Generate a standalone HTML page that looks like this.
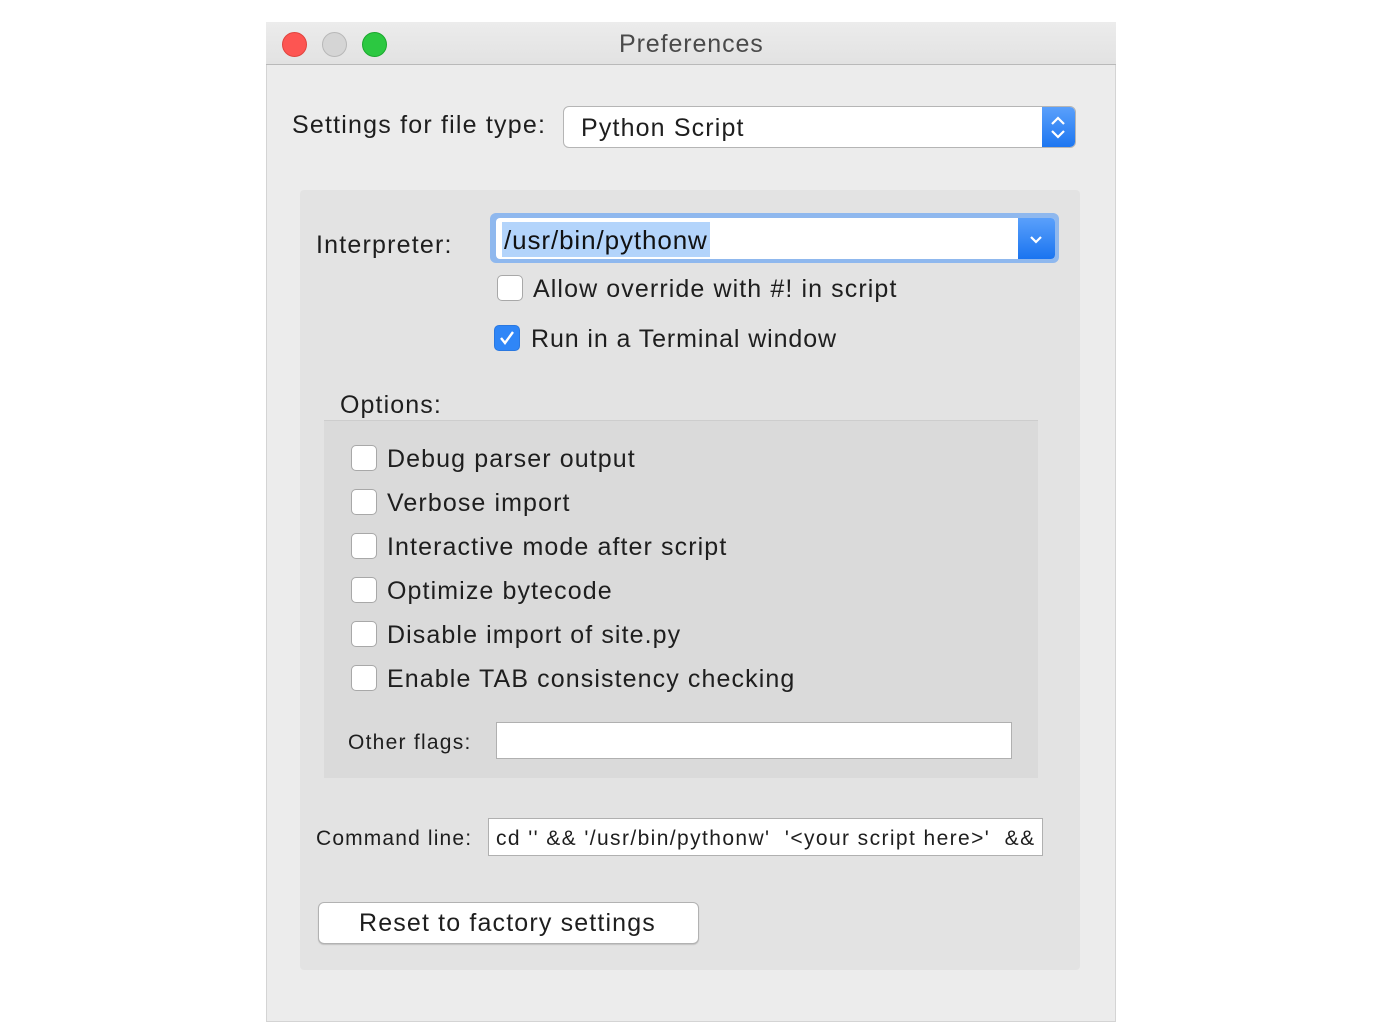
<!DOCTYPE html>
<html><head><meta charset="utf-8"><style>
*{margin:0;padding:0;box-sizing:border-box}
body{width:1378px;height:1036px;background:#fff;position:relative;overflow:hidden;font-family:"Liberation Sans",sans-serif;color:#1e1e1e}
.a{position:absolute}
.t{position:absolute;white-space:nowrap;line-height:1;letter-spacing:1.1px}
.cb{position:absolute;width:26px;height:26px;border:1px solid #a8a8a8;border-radius:5px;background:#fff}
.dot{position:absolute;width:25px;height:25px;border-radius:50%;top:32px}
</style></head><body>
<div class="a" style="left:266px;top:22px;width:850px;height:1000px;background:#ececec;border:1px solid #d4d4d4"></div>
<div class="a" style="left:266px;top:22px;width:850px;height:43px;background:linear-gradient(#ececec,#e2e2e2);border-bottom:1px solid #b9b9b9"></div>
<div class="dot" style="left:282px;background:#fd5552;border:1px solid #e0443e"></div>
<div class="dot" style="left:322px;background:#d5d5d5;border:1px solid #b8b8b8"></div>
<div class="dot" style="left:362px;background:#2cc841;border:1px solid #1ba82e"></div>
<div class="t" style="left:619px;top:32px;font-size:25px;color:#4a4a4a;letter-spacing:0.9px">Preferences</div>

<div class="t" style="left:292px;top:113px;font-size:25px;letter-spacing:1.2px">Settings for file type:</div>
<div class="a" style="left:563px;top:106px;width:513px;height:42px;background:#fff;border:1px solid #b5b5b5;border-radius:6px;overflow:hidden">
 <div class="t" style="left:17px;top:9px;font-size:25px;letter-spacing:1.15px">Python Script</div>
 <div class="a" style="right:0;top:0;width:33px;height:42px;background:linear-gradient(#5aa0fb,#1a74f0)">
  <svg width="33" height="40" viewBox="0 0 33 40"><path d="M10 17l6-6 6 6M10 24l6 6 6-6" stroke="#fff" stroke-width="2.2" fill="none"/></svg>
 </div>
</div>

<div class="a" style="left:300px;top:190px;width:780px;height:780px;background:#e3e3e3;border-radius:4px"></div>
<div class="t" style="left:316px;top:233px;font-size:25px;letter-spacing:1.2px">Interpreter:</div>
<div class="a" style="left:490px;top:213px;width:569px;height:50px;background:#8fb8ee;border-radius:6px"></div>
<div class="a" style="left:496px;top:218px;width:559px;height:41px;background:#fff;border-radius:4px;overflow:hidden">
 <div class="a" style="left:6px;top:4px;width:208px;height:35px;background:#b3d4fb"></div>
 <div class="t" style="left:8px;top:9px;font-size:26px;color:#111;letter-spacing:0.9px">/usr/bin/pythonw</div>
 <div class="a" style="right:0;top:0;width:37px;height:41px;background:linear-gradient(#5aa0fb,#1a74f0)">
  <svg width="37" height="41" viewBox="0 0 37 41"><path d="M13 19l5 5 5-5" stroke="#fff" stroke-width="2.2" fill="none"/></svg>
 </div>
</div>
<div class="cb" style="left:497px;top:275px"></div>
<div class="t" style="left:533px;top:277px;font-size:25px">Allow override with #! in script</div>
<div class="cb" style="left:494px;top:325px;background:#2f86f7;border-color:#2a78e0">
 <svg width="24" height="24" viewBox="0 0 24 24"><path d="M6 12l4 5 8-11" stroke="#fff" stroke-width="2.4" fill="none"/></svg>
</div>
<div class="t" style="left:531px;top:327px;font-size:25px;letter-spacing:0.9px">Run in a Terminal window</div>

<div class="t" style="left:340px;top:393px;font-size:25px">Options:</div>
<div class="a" style="left:324px;top:420px;width:714px;height:358px;background:#dadada;border-top:1px solid #cdcdcd"></div>
<div class="cb" style="left:351px;top:445px"></div><div class="t" style="left:387px;top:447px;font-size:25px">Debug parser output</div>
<div class="cb" style="left:351px;top:489px"></div><div class="t" style="left:387px;top:491px;font-size:25px">Verbose import</div>
<div class="cb" style="left:351px;top:533px"></div><div class="t" style="left:387px;top:535px;font-size:25px">Interactive mode after script</div>
<div class="cb" style="left:351px;top:577px"></div><div class="t" style="left:387px;top:579px;font-size:25px">Optimize bytecode</div>
<div class="cb" style="left:351px;top:621px"></div><div class="t" style="left:387px;top:623px;font-size:25px">Disable import of site.py</div>
<div class="cb" style="left:351px;top:665px"></div><div class="t" style="left:387px;top:667px;font-size:25px">Enable TAB consistency checking</div>
<div class="t" style="left:348px;top:732px;font-size:21px;letter-spacing:1.25px">Other flags:</div>
<div class="a" style="left:496px;top:722px;width:516px;height:37px;background:#fff;border:1px solid #b0b0b0"></div>

<div class="t" style="left:316px;top:828px;font-size:21px;letter-spacing:1.15px">Command line:</div>
<div class="a" style="left:488px;top:818px;width:555px;height:38px;background:#fff;border:1px solid #b0b0b0;overflow:hidden">
 <div class="t" style="left:7px;top:9px;font-size:21px;letter-spacing:1.4px">cd '' &amp;&amp; '/usr/bin/pythonw'&nbsp; '&lt;your script here&gt;'&nbsp; &amp;&amp;</div>
</div>
<div class="a" style="left:318px;top:902px;width:381px;height:42px;background:#fff;border:1px solid #b2b2b2;border-radius:6px;box-shadow:0 1px 1px rgba(0,0,0,.15)"></div>
<div class="t" style="left:359px;top:911px;font-size:25px;letter-spacing:1.15px">Reset to factory settings</div>
</body></html>
